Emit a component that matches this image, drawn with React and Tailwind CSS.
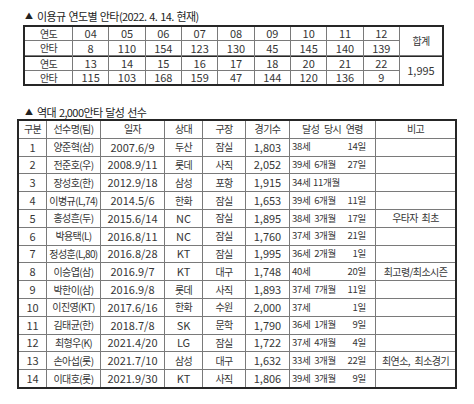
import React from "react";

const FONT = { fontFamily: '"Noto Sans CJK KR", "Noto Sans", sans-serif' };

const top1 = ["04", "05", "06", "07", "08", "09", "10", "11", "12"];
const hit1 = ["8", "110", "154", "123", "130", "45", "145", "140", "139"];
const top2 = ["13", "14", "15", "16", "17", "18", "20", "21", "22"];
const hit2 = ["115", "103", "168", "159", "47", "144", "120", "136", "9"];

const rows = [
  ["1", "양준혁(삼)", "2007.6/9", "두산", "잠실", "1,803", "38세", "", "14일", ""],
  ["2", "전준호(우)", "2008.9/11", "롯데", "사직", "2,052", "39세", "6개월", "27일", ""],
  ["3", "장성호(한)", "2012.9/18", "삼성", "포항", "1,915", "34세", "11개월", "", ""],
  ["4", "이병규(L,74)", "2014.5/6", "한화", "잠실", "1,653", "39세", "6개월", "11일", ""],
  ["5", "홍성흔(두)", "2015.6/14", "NC", "잠실", "1,895", "38세", "3개월", "17일", "우타자 최초"],
  ["6", "박용택(L)", "2016.8/11", "NC", "잠실", "1,760", "37세", "3개월", "21일", ""],
  ["7", "정성훈(L,80)", "2016.8/28", "KT", "잠실", "1,995", "36세", "2개월", "1일", ""],
  ["8", "이승엽(삼)", "2016.9/7", "KT", "대구", "1,748", "40세", "", "20일", "최고령/최소시즌"],
  ["9", "박한이(삼)", "2016.9/8", "롯데", "사직", "1,893", "37세", "7개월", "11일", ""],
  ["10", "이진영(KT)", "2017.6/16", "한화", "수원", "2,000", "37세", "", "1일", ""],
  ["11", "김태균(한)", "2018.7/8", "SK", "문학", "1,790", "36세", "1개월", "9일", ""],
  ["12", "최형우(K)", "2021.4/20", "LG", "잠실", "1,722", "37세", "4개월", "4일", ""],
  ["13", "손아섭(롯)", "2021.7/10", "삼성", "대구", "1,632", "33세", "3개월", "22일", "최연소, 최소경기"],
  ["14", "이대호(롯)", "2021.9/30", "KT", "사직", "1,806", "39세", "3개월", "9일", ""],
];

function Num({ children, className = "" }) {
  return (
    <div className={"bg-white flex items-center justify-center leading-none text-[11px] text-[#363636] whitespace-nowrap " + className}>
      {children}
    </div>
  );
}

function Kor({ children, className = "" }) {
  return (
    <div className={"bg-white flex items-center justify-center leading-none text-[10px] tracking-[-0.6px] [word-spacing:2px] text-[#363636] whitespace-nowrap " + className}>
      {children}
    </div>
  );
}

function Title({ children }) {
  return (
    <div className="flex items-center h-[14px] leading-none text-[#222]">
      <span className="text-[8px] mr-[4px]">▲</span>
      <span className="text-[11px] tracking-[-0.6px] [word-spacing:1px]">{children}</span>
    </div>
  );
}

export default function App() {
  return (
    <div className="w-[474px] h-[404px] bg-white pt-[9px] overflow-hidden" style={FONT}>
      <div className="ml-[25px]">
        <Title>이용규 연도별 안타(2022. 4. 14. 현재)</Title>
      </div>

      <div className="ml-[23px] mt-[2px] w-[421px] border-2 border-[#262626] bg-[#7a7a7a] grid grid-cols-[47px_repeat(9,minmax(0,1fr))_42px] grid-rows-[13px_14px_14px_13px] gap-px">
        <Kor>연도</Kor>
        {top1.map((v) => (
          <Num key={"a" + v}>{v}</Num>
        ))}
        <Kor className="row-span-2">합계</Kor>
        <Kor>안타</Kor>
        {hit1.map((v, i) => (
          <Num key={"b" + i}>{v}</Num>
        ))}
        <Kor className="border-t border-[#262626]">연도</Kor>
        {top2.map((v) => (
          <Num key={"c" + v} className="border-t border-[#262626]">{v}</Num>
        ))}
        <Num className="row-span-2 border-t border-[#262626]">1,995</Num>
        <Kor>안타</Kor>
        {hit2.map((v, i) => (
          <Num key={"d" + i}>{v}</Num>
        ))}
      </div>

      <div className="ml-[25px] mt-[19px]">
        <Title>역대 2,000안타 달성 선수</Title>
      </div>

      <div className="ml-[17px] w-[440px] border-2 border-[#262626] bg-[#7a7a7a] grid grid-cols-[27px_53px_63px_37px_42px_43px_85px_79px] auto-rows-[16.8px] gap-px">
        <Kor>구분</Kor>
        <Kor>선수명(팀)</Kor>
        <Kor>일자</Kor>
        <Kor>상대</Kor>
        <Kor>구장</Kor>
        <Kor>경기수</Kor>
        <Kor className="tracking-[-0.2px] [word-spacing:3px]">달성 당시 연령</Kor>
        <Kor>비고</Kor>
        {rows.map((r) => (
          <React.Fragment key={r[0]}>
            <Num>{r[0]}</Num>
            <Kor className={r[1].includes(",") ? "text-[9px] tracking-[-0.6px]" : ""}>{r[1]}</Kor>
            <Num>{r[2]}</Num>
            {/^[A-Z]+$/.test(r[3]) ? <Num className="text-[10.5px]">{r[3]}</Num> : <Kor>{r[3]}</Kor>}
            <Kor>{r[4]}</Kor>
            <Num>{r[5]}</Num>
            <div className="bg-white flex items-center leading-none text-[9.5px] tracking-[-0.3px] text-[#363636] whitespace-nowrap pl-[2px]">
              <span className="w-[17px] shrink-0">{r[6]}</span>
              {r[8] === "" ? (
                <span className="pl-[4px] shrink-0">{r[7]}</span>
              ) : (
                <>
                  <span className="w-[27px] shrink-0 text-right">{r[7]}</span>
                  <span className="w-[30px] shrink-0 text-right">{r[8]}</span>
                </>
              )}
            </div>
            <Kor className={r[9].includes(",") ? "tracking-[-0.3px] [word-spacing:3px]" : ""}>{r[9]}</Kor>
          </React.Fragment>
        ))}
      </div>
    </div>
  );
}
